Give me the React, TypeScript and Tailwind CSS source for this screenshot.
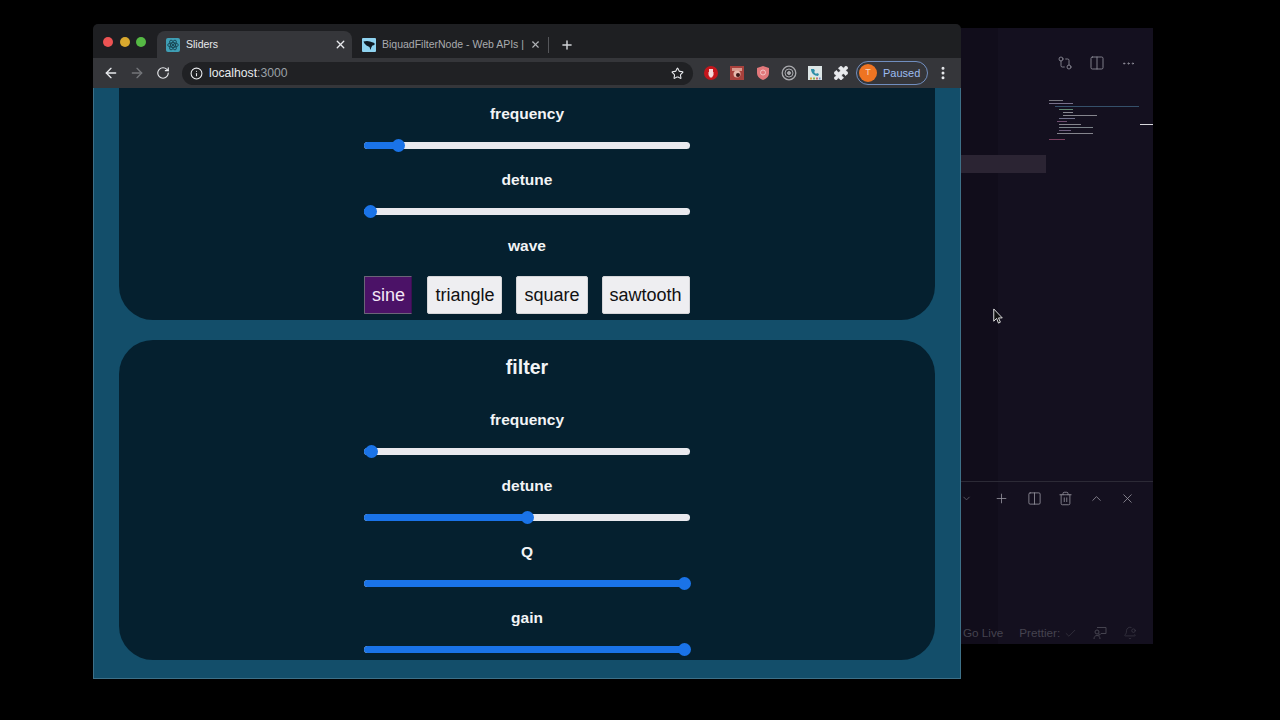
import {
  ArrowLeft,
  ArrowRight,
  BellDot,
  Check,
  ChevronDown,
  ChevronUp,
  Columns2,
  Ellipsis,
  GitCompare,
  Info,
  MoreVertical,
  Plus,
  Puzzle,
  RotateCw,
  Star,
  Trash2,
  X,
} from "lucide-react";

const osc = [
  { label: "frequency", value: 34 },
  { label: "detune", value: 6 },
];

const filter = [
  { label: "frequency", value: 7 },
  { label: "detune", value: 163 },
  { label: "Q", value: 320 },
  { label: "gain", value: 320 },
];

const waves = ["sine", "triangle", "square", "sawtooth"];

const codeLines = [
  [0, 14, "#77777f"],
  [0, 24, "#77708a"],
  [6, 84, "#35506a"],
  [10, 14, "#5f8570"],
  [14, 10, "#8a8a92"],
  [14, 34, "#85858d"],
  [10, 16, "#70708a"],
  [8, 10, "#704f70"],
  [10, 22, "#85858d"],
  [10, 34, "#7a8288"],
  [10, 12, "#6f5f80"],
  [8, 36, "#85858d"],
  [0, 0, "#000"],
  [0, 16, "#7a4060"],
] as const;

function Slider({ value }: { value: number }) {
  return (
    <div className="relative w-[326px] h-[13px] flex items-center">
      <div className="w-full h-[7px] rounded-full bg-[#e9e9ee] overflow-hidden">
        <div className="h-full bg-[#1a73e8]" style={{ width: value }} />
      </div>
      <div
        className="absolute top-0 w-[13px] h-[13px] rounded-full bg-[#1a73e8]"
        style={{ left: value - 6 }}
      />
    </div>
  );
}

function Control({ label, value }: { label: string; value: number }) {
  return (
    <div className="h-[66px] flex flex-col items-center">
      <div className="h-6 leading-6 text-[15.5px] font-bold text-[#f2f4f6]">{label}</div>
      <div className="mt-[13px]">
        <Slider value={value} />
      </div>
    </div>
  );
}

function ReactFavicon() {
  return (
    <svg viewBox="0 0 14 14" className="w-[14px] h-[14px] rounded-[2px] bg-[#3f9fb5]">
      <g fill="none" stroke="#123845" strokeWidth="0.8">
        <ellipse cx="7" cy="7" rx="5.4" ry="2.2" />
        <ellipse cx="7" cy="7" rx="5.4" ry="2.2" transform="rotate(60 7 7)" />
        <ellipse cx="7" cy="7" rx="5.4" ry="2.2" transform="rotate(120 7 7)" />
      </g>
      <circle cx="7" cy="7" r="1.1" fill="#123845" />
    </svg>
  );
}

function MdnFavicon() {
  return (
    <svg viewBox="0 0 14 14" className="w-[14px] h-[14px] rounded-[1px] bg-[#8fd3f0]">
      <path d="M1.500 3.500L5 3l3 .5 4.500 1.500v2l-2 .5-1 1.500-1 3-1-3-3-1.500-2-2z" fill="#0e1a24" />
    </svg>
  );
}

function Extensions() {
  return (
    <div className="flex items-center gap-[10px] ml-[10px]">
      <svg viewBox="0 0 16 16" className="w-4 h-4">
        <circle cx="8" cy="8" r="7" fill="#c4161c" />
        <path d="M5.500 7h5v3l-1.500 2.500h-2l-1.500-2.500z" fill="#f3d9da" />
        <path d="M6 4h4v4H6z" fill="#f3d9da" />
      </svg>
      <svg viewBox="0 0 16 16" className="w-4 h-4">
        <rect x="1" y="1" width="14" height="14" fill="#a8413c" />
        <path d="M3 3h10v3H3z" fill="#d99a8e" />
        <circle cx="8" cy="9" r="3.500" fill="#e8b9ad" />
        <circle cx="9" cy="10" r="2" fill="#3a1616" />
      </svg>
      <svg viewBox="0 0 16 16" className="w-4 h-4">
        <path d="M8 1l6 2v5c0 3.500-3 6-6 7-3-1-6-3.500-6-7V3z" fill="#e2787b" />
        <circle cx="8" cy="7.500" r="2.500" fill="none" stroke="#f3c4c4" />
      </svg>
      <svg viewBox="0 0 16 16" className="w-4 h-4" fill="none" stroke="#a8a9ad">
        <circle cx="8" cy="8" r="6.800" strokeWidth="1.300" />
        <circle cx="8" cy="8" r="4" />
        <circle cx="8" cy="8" r="1.500" fill="#a8a9ad" />
      </svg>
      <svg viewBox="0 0 16 16" className="w-4 h-4">
        <rect x="1" y="1" width="14" height="14" fill="#dde6e6" />
        <path d="M4 4c0 4 3 7 7 7l1-2-2-1-1 1-2-2 1-1-1-2z" fill="#2f8fa8" />
        <path d="M3 12.500h2v2H3z" fill="#d9a63c" />
        <path d="M6 12.500h2v2H6z" fill="#8fb84f" />
        <path d="M9 12.500h2v2H9z" fill="#c96f6f" />
        <path d="M12 12.500h1.500v2H12z" fill="#6f8fc9" />
      </svg>
      <Puzzle className="w-4 h-4 text-[#e8eaed]" fill="#e8eaed" strokeWidth={1} />
    </div>
  );
}

function BrowserWindow() {
  return (
    <div className="absolute left-[93px] top-[24px] w-[868px] h-[655px] flex flex-col overflow-hidden rounded-t-[5px] font-['Liberation_Sans',sans-serif]">
      <div className="h-[34px] bg-[#1e1f22] flex items-end shrink-0">
        <div className="w-[64px] h-[32px] flex items-center gap-[6.500px] pl-[10px]">
          <span className="w-[10px] h-[10px] rounded-full bg-[#ec5353]" />
          <span className="w-[10px] h-[10px] rounded-full bg-[#d8a82e]" />
          <span className="w-[10px] h-[10px] rounded-full bg-[#55b944]" />
        </div>
        <div className="w-[195px] h-[27px] bg-[#35363a] rounded-t-lg flex items-center pl-[9px] pr-[5px] gap-[6px]">
          <ReactFavicon />
          <span className="text-[10.5px] text-[#e8eaed] flex-1">Sliders</span>
          <X className="w-[13px] h-[13px] text-[#e8eaed]" strokeWidth={2.5} />
        </div>
        <div className="w-[196px] h-[27px] flex items-center pl-[10px] pr-[7px] gap-[6px]">
          <MdnFavicon />
          <span className="text-[10.5px] text-[#a9abaf] flex-1 whitespace-nowrap">BiquadFilterNode - Web APIs |</span>
          <X className="w-[11px] h-[11px] text-[#b0b2b6] shrink-0" strokeWidth={2.5} />
        </div>
        <div className="h-[27px] flex items-center gap-[11px]">
          <span className="w-px h-[16px] bg-[#55565a]" />
          <Plus className="w-[14px] h-[14px] text-[#d0d2d6]" strokeWidth={2.5} />
        </div>
      </div>

      <div className="h-[30px] bg-[#35363a] flex items-center pl-[10px] shrink-0">
        <ArrowLeft className="w-4 h-4 text-[#e8eaed]" strokeWidth={2} />
        <ArrowRight className="w-4 h-4 ml-[10px] text-[#74767a]" strokeWidth={2} />
        <RotateCw className="w-[14px] h-[14px] ml-[11px] text-[#e8eaed]" strokeWidth={2} />
        <div className="ml-[12px] w-[511px] h-[23px] rounded-full bg-[#202124] flex items-center pl-[8px] pr-[9px]">
          <Info className="w-[13px] h-[13px] text-[#e8eaed]" strokeWidth={2} />
          <span className="ml-[6px] text-[12.2px] text-[#e8eaed] flex-1">
            localhost<span className="text-[#9aa0a6]">:3000</span>
          </span>
          <Star className="w-[13px] h-[13px] text-[#e8eaed]" strokeWidth={2} />
        </div>
        <Extensions />
        <div className="ml-[7px] w-[72px] h-[24px] rounded-full border border-[#8ab4f8]/70 flex items-center pl-[2px] gap-[6px]">
          <span className="w-[18px] h-[18px] rounded-full bg-[#ee7422] text-[9px] text-[#f6d9c2] flex items-center justify-center">T</span>
          <span className="text-[11px] text-[#9cbcf0]">Paused</span>
        </div>
        <MoreVertical className="w-4 h-4 ml-[7px] text-[#e8eaed]" strokeWidth={2.5} />
      </div>

      <div className="flex-1 bg-[#134e6a] px-[25px] flex flex-col gap-[20px] border-l border-r border-b border-[#3d7088]">
        <div className="h-[232px] bg-[#05202f] rounded-b-[34px] pt-[14px] flex flex-col items-center shrink-0">
          {osc.map((c) => (
            <Control key={c.label} label={c.label} value={c.value} />
          ))}
          <div className="h-6 leading-6 text-[15.5px] font-bold text-[#f2f4f6]">wave</div>
          <div className="mt-[18px] flex gap-[14px]">
            {waves.map((w) => (
              <button
                key={w}
                className={
                  w === "sine"
                    ? "h-[38px] w-[48px] mr-[1px] text-[18px] rounded-[1px] bg-[#4b1267] text-[#f3e8f6] border border-[#6b6478] border-r-[#3a1050]"
                    : "h-[38px] px-[7px] text-[18px] rounded-[2px] bg-[#eeeef1] text-[#111] border border-[#d5d5d8]"
                }
              >
                {w}
              </button>
            ))}
          </div>
        </div>

        <div className="h-[320px] bg-[#05202f] rounded-[34px] pt-[13px] flex flex-col items-center shrink-0">
          <div className="h-[28px] leading-7 text-[19.5px] font-bold text-[#f2f4f6]">filter</div>
          <div className="mt-[27px]">
            {filter.map((c) => (
              <Control key={c.label + c.value} label={c.label} value={c.value} />
            ))}
          </div>
        </div>
      </div>
    </div>
  );
}

function EditorWindow() {
  return (
    <div className="absolute left-[961px] top-[28px] w-[192px] h-[616px] bg-[#14101f] flex font-['Liberation_Sans',sans-serif]">
      <div className="w-[37px] h-full bg-[#110d1b]" />
      <div className="flex-1 flex flex-col relative">
        <div className="h-[72px] flex items-center justify-end gap-[16px] pr-[17px] pb-[2px] text-[#8f8d99]">
          <GitCompare className="w-4 h-4" strokeWidth={1.3} />
          <Columns2 className="w-4 h-4" strokeWidth={1.3} />
          <Ellipsis className="w-[15px] h-[15px]" strokeWidth={1.5} />
        </div>

        <div className="ml-[51px] flex flex-col gap-[2px]">
          {codeLines.map((l, i) => (
            <div key={i} className="h-px flex" style={{ marginLeft: l[0] }}>
              <div className="h-px" style={{ width: l[1], background: l[2] }} />
            </div>
          ))}
        </div>
        <div className="absolute right-0 top-[96px] w-[13px] h-px bg-[#d8d8dc]" />
        <div className="absolute -left-[37px] top-[127px] w-[85px] h-[18px] bg-[#2b2433]" />

        <div className="absolute -left-[37px] right-0 top-[453px] h-px bg-[#2c2a36]" />
        <div className="absolute -left-[37px] right-0 top-[462px] h-4 flex items-center text-[#96949f]">
          <ChevronDown className="w-[11px] h-[11px] text-[#5b5965]" />
          <Plus className="ml-[22px] w-[15px] h-[15px]" strokeWidth={1.3} />
          <Columns2 className="ml-[18px] w-[15px] h-[15px]" strokeWidth={1.3} />
          <Trash2 className="ml-[16px] w-[15px] h-[15px]" strokeWidth={1.3} />
          <ChevronUp className="ml-[16px] w-[15px] h-[15px]" strokeWidth={1.3} />
          <X className="ml-[16px] w-[15px] h-[15px]" strokeWidth={1.3} />
        </div>

        <div className="absolute -left-[37px] right-0 top-[597px] h-4 flex items-center text-[11.7px] text-[#45434f] whitespace-nowrap">
          <span className="ml-[2px]">Go Live</span>
          <span className="ml-[16px]">Prettier:</span>
          <Check className="ml-[4px] w-[13px] h-[13px]" strokeWidth={1} />
          <svg viewBox="0 0 14 14" className="ml-[16px] w-[14px] h-[14px]" fill="none" stroke="#45434f">
            <path d="M4 1.500h9v6H8L6 9.500V7.500" />
            <circle cx="4" cy="6" r="2" />
            <path d="M1 13c0-2 1-3.500 3-3.500S7 11 7 13" />
          </svg>
          <BellDot className="ml-[16px] w-[14px] h-[14px]" strokeWidth={1} />
        </div>
      </div>
    </div>
  );
}

export default function App() {
  return (
    <div className="relative w-[1280px] h-[720px] bg-black overflow-hidden">
      <EditorWindow />
      <BrowserWindow />
      <svg viewBox="0 0 12 18" className="absolute left-[992px] top-[308px] w-[12px] h-[17px]">
        <path d="M1.500 1v13l3-3 2 5 2-1-2-4.500h4z" fill="#111" stroke="#e8e8e8" strokeWidth="1" />
      </svg>
    </div>
  );
}
